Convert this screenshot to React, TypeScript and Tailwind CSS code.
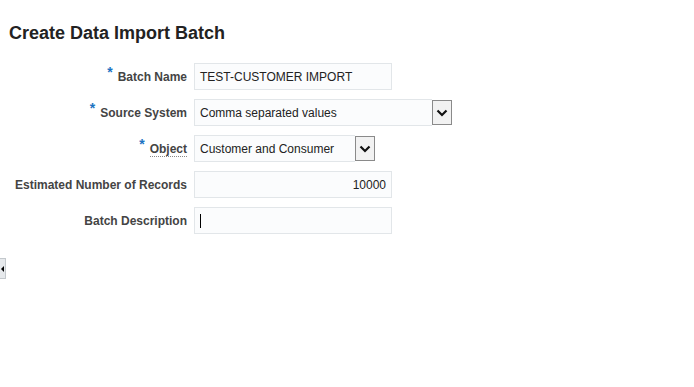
import React from 'react';

const labelCls = 'w-[187px] shrink-0 text-right text-[12px] font-bold text-[#444]';

function Required() {
  return <span className="relative -top-[4px] mr-[5px] text-[14px] font-bold text-[#1b73c2]">*</span>;
}

function Chevron() {
  return (
    <svg width="12" height="8" viewBox="0 0 12 8">
      <path d="M1.5 1.5 L6 6 L10.5 1.5" fill="none" stroke="#111" strokeWidth="2.2" />
    </svg>
  );
}

function Field({ children, className }: { children?: React.ReactNode; className: string }) {
  return (
    <div className={`flex h-[27px] items-center border border-[#e2e6e9] bg-[#fbfcfd] px-[5px] text-[12px] text-[#222] ${className}`}>
      {children}
    </div>
  );
}

function Select({ value, width }: { value: string; width: string }) {
  return (
    <div className="flex h-[27px] items-center">
      <Field className={`${width} border-r-0`}>{value}</Field>
      <div className="flex h-[25px] w-[20px] items-center justify-center border border-[#8a8a8a] bg-[#f2f2f2]">
        <Chevron />
      </div>
    </div>
  );
}

export default function App() {
  return (
    <div className="relative h-[387px] w-[694px] bg-white" style={{ fontFamily: '"Liberation Sans", Arial, sans-serif' }}>
      <h1 className="pl-[9px] pt-[23px] text-[18px] font-bold leading-[20px] text-[#222]">Create Data Import Batch</h1>
      <div className="mt-[20px] flex flex-col gap-[9px]">
        <div className="flex items-center gap-[7px]">
          <div className={labelCls}>
            <Required />Batch Name
          </div>
          <Field className="w-[198px]">TEST-CUSTOMER IMPORT</Field>
        </div>
        <div className="flex items-center gap-[7px]">
          <div className={labelCls}>
            <Required />Source System
          </div>
          <Select value="Comma separated values" width="w-[238px]" />
        </div>
        <div className="flex items-center gap-[7px]">
          <div className={labelCls}>
            <Required />
            <span className="border-b border-dotted border-[#888]">Object</span>
          </div>
          <Select value="Customer and Consumer" width="w-[161px]" />
        </div>
        <div className="flex items-center gap-[7px]">
          <div className={labelCls}>Estimated Number of Records</div>
          <Field className="w-[198px] justify-end">10000</Field>
        </div>
        <div className="flex items-center gap-[7px]">
          <div className={labelCls}>Batch Description</div>
          <Field className="w-[198px]">
            <span className="h-[14px] w-px bg-black" />
          </Field>
        </div>
      </div>
      <div className="absolute left-0 top-[258px] flex h-[21px] w-[6px] items-center justify-center border border-l-0 border-[#c3c8cc] bg-[#e6e9ec]">
        <span className="h-0 w-0 border-y-[3px] border-r-[3px] border-y-transparent border-r-black" />
      </div>
    </div>
  );
}
